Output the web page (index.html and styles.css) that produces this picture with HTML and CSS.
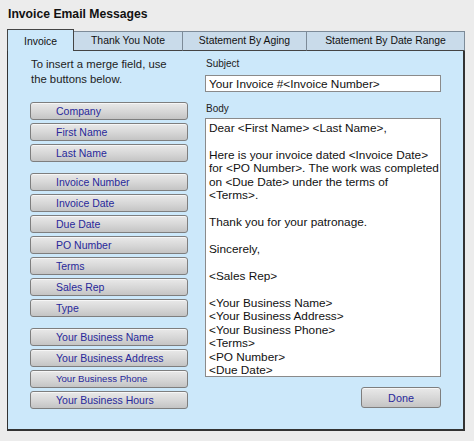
FILE: index.html
```html
<!DOCTYPE html>
<html lang="en">
<head>
	<meta charset="UTF-8">
	<title>Invoice Email Messages</title>
	<link rel="stylesheet" href="styles.css">
</head>
<body>

<h3 class="title">Invoice Email Messages</h3>

<div class="tabs">
	<div class="tab active">Invoice</div>
	<div class="tab tab-thanks">Thank You Note</div>
	<div class="tab tab-aging">Statement By Aging</div>
	<div class="tab tab-range">Statement By Date Range</div>
</div>

<div class="panel">
	<div class="fields">
		<p class="intro">To insert a merge field, use<br>the buttons below.</p>
		<div class="group">
			<button type="button">Company</button>
			<button type="button">First Name</button>
			<button type="button">Last Name</button>
		</div>
		<div class="group">
			<button type="button">Invoice Number</button>
			<button type="button">Invoice Date</button>
			<button type="button">Due Date</button>
			<button type="button">PO Number</button>
			<button type="button">Terms</button>
			<button type="button">Sales Rep</button>
			<button type="button">Type</button>
		</div>
		<div class="group">
			<button type="button">Your Business Name</button>
			<button type="button">Your Business Address</button>
			<button type="button" class="small">Your Business Phone</button>
			<button type="button">Your Business Hours</button>
		</div>
	</div>

	<div class="editor">
		<label for="subject">Subject</label>
		<input id="subject" value="Your Invoice #&lt;Invoice Number&gt;"/>
		<label for="body" class="body-label">Body</label>
		<textarea id="body" wrap="off">Dear &lt;First Name&gt; &lt;Last Name&gt;,

Here is your invoice dated &lt;Invoice Date&gt;
for &lt;PO Number&gt;. The work was completed
on &lt;Due Date&gt; under the terms of
&lt;Terms&gt;.

Thank you for your patronage.

Sincerely,

&lt;Sales Rep&gt;

&lt;Your Business Name&gt;
&lt;Your Business Address&gt;
&lt;Your Business Phone&gt;
&lt;Terms&gt;
&lt;PO Number&gt;
&lt;Due Date&gt;</textarea>
		<div class="actions">
			<button type="button" class="done">Done</button>
		</div>
	</div>
</div>

</body>
</html>
```

FILE: styles.css
```css
body {
	margin: 0;
	padding: 0 9px 0 7px;
	background: #ececec;
	font-family: "Liberation Sans", Arial, sans-serif;
	color: #111;
	height: 441px;
	box-sizing: border-box;
}
.title {
	margin: 0;
	padding: 7px 0 0 1px;
	height: 29px;
	box-sizing: border-box;
	font-size: 12.2px;
	font-weight: bold;
}
.tabs {
	display: flex;
	align-items: flex-end;
	height: 22px;
}
.tab {
	box-sizing: border-box;
	height: 20px;
	border: 1px solid #7d8b98;
	border-left: none;
	border-bottom: 1px solid #444;
	background: #c9dbea;
	font-size: 10.4px;
	text-align: center;
	line-height: 18px;
	color: #111;
}
.tab.active {
	width: 67px;
	height: 22px;
	border: 1px solid #444;
	border-bottom: none;
	background: #cce8fa;
	line-height: 23px;
}
.tab-thanks {
	width: 109px;
}
.tab-aging {
	width: 124px;
}
.tab-range {
	flex: 1;
	border-right-color: #7d8b98;
}
.panel {
	box-sizing: border-box;
	height: 380px;
	background: #cce8fa;
	border: 1px solid #333;
	border-top: none;
	border-right-width: 2px;
	border-bottom-width: 2px;
	display: grid;
	grid-template-columns: 158px 236px;
	column-gap: 17px;
	padding: 0 0 0 22px;
}
.fields {
	display: flex;
	flex-direction: column;
	gap: 11px;
}
.intro {
	margin: 0;
	padding: 6px 0 0 1px;
	height: 40px;
	box-sizing: border-box;
	font-size: 11.3px;
	line-height: 15px;
	color: #222;
}
.group {
	display: flex;
	flex-direction: column;
	gap: 3px;
}
button {
	box-sizing: border-box;
	height: 18px;
	padding: 0 0 1px 25px;
	border: 1px solid #7e7e7e;
	border-radius: 3px;
	background: linear-gradient(#e9e9e9, #d6d6d6 55%, #c4c4c4);
	font-family: "Liberation Sans", Arial, sans-serif;
	font-size: 10.5px;
	color: #28289a;
	text-align: left;
	box-shadow: inset 0 1px 0 #f6f6f6;
}
button.small {
	font-size: 9.6px;
}
.editor {
	display: flex;
	flex-direction: column;
	padding-top: 7px;
}
label {
	font-size: 10px;
	color: #222;
	height: 17px;
	padding-left: 1px;
}
.body-label {
	padding-top: 10px;
	height: 16px;
	box-sizing: content-box;
	line-height: 14px;
}
input, textarea {
	box-sizing: border-box;
	border: 1px solid #8a8a8a;
	background: #fff;
	font-family: "Liberation Sans", Arial, sans-serif;
	font-size: 11.8px;
	color: #111;
	margin: 0;
	outline: none;
}
input {
	height: 17px;
	padding: 0 3px;
}
textarea {
	height: 259px;
	padding: 3px 0 0 3px;
	line-height: 13.45px;
	resize: none;
	overflow: hidden;
	white-space: pre;
}
.actions {
	display: flex;
	justify-content: flex-end;
	padding-top: 10px;
}
button.done {
	width: 80px;
	height: 21px;
	padding: 0;
	text-align: center;
	font-size: 10.8px;
}
```
